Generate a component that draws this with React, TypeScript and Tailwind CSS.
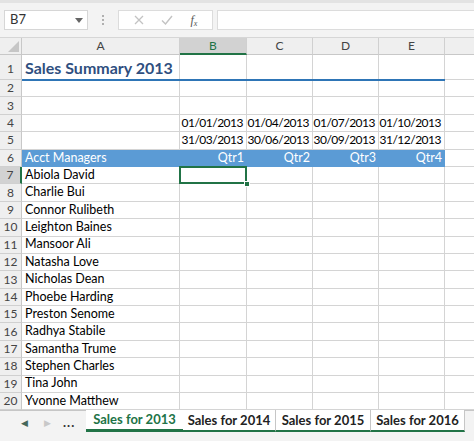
import React from 'react';

const COLS = [
  { key: 'A', w: 'w-[158px]' },
  { key: 'B', w: 'w-[67px]' },
  { key: 'C', w: 'w-[66px]' },
  { key: 'D', w: 'w-[66px]' },
  { key: 'E', w: 'w-[66px]' },
  { key: 'F', w: 'w-[40px]' },
];

const NAMES = [
  'Abiola David',
  'Charlie Bui',
  'Connor Rulibeth',
  'Leighton Baines',
  'Mansoor Ali',
  'Natasha Love',
  'Nicholas Dean',
  'Phoebe Harding',
  'Preston Senome',
  'Radhya Stabile',
  'Samantha Trume',
  'Stephen Charles',
  'Tina John',
  'Yvonne Matthew',
];

const START = ['01/01/2013', '01/04/2013', '01/07/2013', '01/10/2013'];
const END = ['31/03/2013', '30/06/2013', '30/09/2013', '31/12/2013'];

function Cell({
  w,
  children,
  className = '',
}: {
  w: string;
  children?: React.ReactNode;
  className?: string;
}) {
  return (
    <div
      className={`${w} shrink-0 h-full border-r border-b border-[#d4d4d4] px-[3px] flex items-center overflow-hidden whitespace-nowrap ${className}`}
    >
      {children}
    </div>
  );
}

function RowHead({ n, active = false, tall = false }: { n: number; active?: boolean; tall?: boolean }) {
  return (
    <div
      className={`w-[22px] shrink-0 h-full flex items-center justify-center text-[12px] text-[#444] border-b border-[#d0d0d0] ${
        active ? 'bg-[#d2d2d2] border-r-2 border-r-[#217346]' : 'bg-[#efefef] border-r border-r-[#c8c8c8]'
      } ${tall ? 'pt-[4px]' : ''}`}
    >
      {n}
    </div>
  );
}

export default function App() {
  return (
    <div
      className="w-[474px] h-[441px] overflow-hidden bg-white text-[12.5px] text-black flex flex-col"
      style={{ fontFamily: 'Lato, "Open Sans", sans-serif' }}
    >
      {/* formula bar */}
      <div className="h-[37px] shrink-0 bg-[#f3f3f3] border-t-[3px] border-[#e3e3e3] flex items-center pl-[4px]">
        <div className="w-[84px] h-[20px] bg-white border border-[#d6d6d6] flex items-center justify-between pl-[5px] pr-[4px] text-[13px] text-[#333]">
          <span>B7</span>
          <svg width="8" height="5" viewBox="0 0 8 5">
            <path d="M0 0h8L4 5z" fill="#666" />
          </svg>
        </div>
        <div className="w-[30px] flex flex-col items-center gap-[2px]">
          <span className="w-[2px] h-[2px] bg-[#b0b0b0]" />
          <span className="w-[2px] h-[2px] bg-[#b0b0b0]" />
          <span className="w-[2px] h-[2px] bg-[#b0b0b0]" />
        </div>
        <div className="w-[95px] h-[20px] bg-white border border-[#dcdcdc] flex items-center justify-around px-[6px]">
          <svg width="10" height="10" viewBox="0 0 10 10">
            <path d="M1 1l8 8M9 1l-8 8" stroke="#c3c3c3" strokeWidth="1.3" />
          </svg>
          <svg width="12" height="10" viewBox="0 0 12 10">
            <path d="M1 5.5l3.5 3.5L11 1" stroke="#c3c3c3" strokeWidth="1.4" fill="none" />
          </svg>
          <span className="text-[12px] italic text-[#555]" style={{ fontFamily: '"Liberation Serif", serif' }}>
            f<sub className="text-[8px]">x</sub>
          </span>
        </div>
        <div className="flex-1 h-[20px] ml-[4px] bg-white border border-[#dcdcdc] border-r-0" />
      </div>

      {/* column headers */}
      <div className="h-[18px] shrink-0 flex bg-[#efefef] border-t border-[#d6d6d6]">
        <div className="w-[22px] shrink-0 h-full border-r border-b border-[#c8c8c8] relative">
          <svg className="absolute right-[2px] bottom-[2px]" width="11" height="11" viewBox="0 0 11 11">
            <path d="M11 0v11H0z" fill="#c6c6c6" />
          </svg>
        </div>
        {COLS.map((c) => (
          <div
            key={c.key}
            className={`${c.w} shrink-0 h-full flex items-center justify-center text-[12px] text-[#444] border-r border-[#d0d0d0] ${
              c.key === 'B' ? 'bg-[#d2d2d2] border-b-2 border-b-[#217346] text-[#217346]' : 'border-b border-b-[#c8c8c8]'
            }`}
          >
            {c.key === 'F' ? '' : c.key}
          </div>
        ))}
      </div>

      {/* row 1 */}
      <div className="h-[25px] shrink-0 flex">
        <RowHead n={1} tall />
        <div className="flex h-full relative">
          <Cell w={COLS[0].w} className="items-end pb-[3px]">
            <span className="font-bold text-[16px] text-[#2f4f7f] leading-none">Sales Summary 2013</span>
          </Cell>
          {COLS.slice(1).map((c) => (
            <Cell key={c.key} w={c.w} />
          ))}
          <div className="absolute left-0 bottom-[-1px] w-[423px] h-[2px] bg-[#2e75b6]" />
        </div>
      </div>

      {/* rows 2-3 */}
      {[2, 3].map((n) => (
        <div key={n} className="h-[17.4px] shrink-0 flex">
          <RowHead n={n} />
          {COLS.map((c) => (
            <Cell key={c.key} w={c.w} />
          ))}
        </div>
      ))}

      {/* rows 4-5 */}
      {[START, END].map((dates, i) => (
        <div key={i} className="h-[17.4px] shrink-0 flex">
          <RowHead n={4 + i} />
          <Cell w={COLS[0].w} />
          {dates.map((d, j) => (
            <Cell key={d} w={COLS[j + 1].w} className="justify-end text-[12px] tracking-[-0.5px]">
              {d}
            </Cell>
          ))}
          <Cell w={COLS[5].w} />
        </div>
      ))}

      {/* row 6 header band */}
      <div className="h-[17.4px] shrink-0 flex">
        <RowHead n={6} />
        <div className="w-[158px] shrink-0 h-full bg-[#5b9bd5] text-white px-[3px] flex items-center">Acct Managers</div>
        {['Qtr1', 'Qtr2', 'Qtr3', 'Qtr4'].map((q, j) => (
          <div
            key={q}
            className={`${COLS[j + 1].w} shrink-0 h-full bg-[#5b9bd5] text-white px-[3px] flex items-center justify-end`}
          >
            {q}
          </div>
        ))}
        <Cell w={COLS[5].w} />
      </div>

      {/* name rows */}
      {NAMES.map((name, i) => (
        <div key={name} className="h-[17.4px] shrink-0 flex">
          <RowHead n={7 + i} active={i === 0} />
          <Cell w={COLS[0].w}>{name}</Cell>
          {COLS.slice(1).map((c) =>
            i === 0 && c.key === 'B' ? (
              <div key={c.key} className={`${c.w} shrink-0 h-full relative border-r border-b border-[#d4d4d4]`}>
                <div className="absolute left-[-1px] top-[-1px] right-[-1px] bottom-[-1px] border-2 border-[#217346]" />
                <div className="absolute right-[-4px] bottom-[-4px] w-[6px] h-[6px] bg-[#217346] border border-white" />
              </div>
            ) : (
              <Cell key={c.key} w={c.w} />
            )
          )}
        </div>
      ))}

      {/* sheet tabs */}
      <div className="flex-1 bg-[#f3f3f3] border-t border-[#c6c6c6] flex items-start">
        <div className="w-[86px] shrink-0 h-[22px] flex items-center text-[13px]">
          <span className="ml-[21px] text-[#44675a] text-[9px]">◀</span>
          <span className="ml-[16px] text-[#c8c8c8] text-[9px]">▶</span>
          <span className="ml-[12px] text-[#333] font-bold tracking-[1px]">...</span>
        </div>
        <div className="h-[22px] w-[97px] shrink-0 bg-white border-b-[3px] border-[#217346] flex items-center justify-center font-bold text-[#217346] text-[13px] -mt-px">
          Sales for 2013
        </div>
        {['Sales for 2014', 'Sales for 2015', 'Sales for 2016'].map((t, i) => (
          <div
            key={t}
            className={`h-[22px] shrink-0 ${['w-[93px]', 'w-[95px]', 'w-[94px]'][i]} bg-white border-r border-[#c6c6c6] border-b-2 border-b-[#217346] flex items-center justify-center font-bold text-[#222] text-[13px] -mt-px`}
          >
            {t}
          </div>
        ))}
      </div>
    </div>
  );
}
